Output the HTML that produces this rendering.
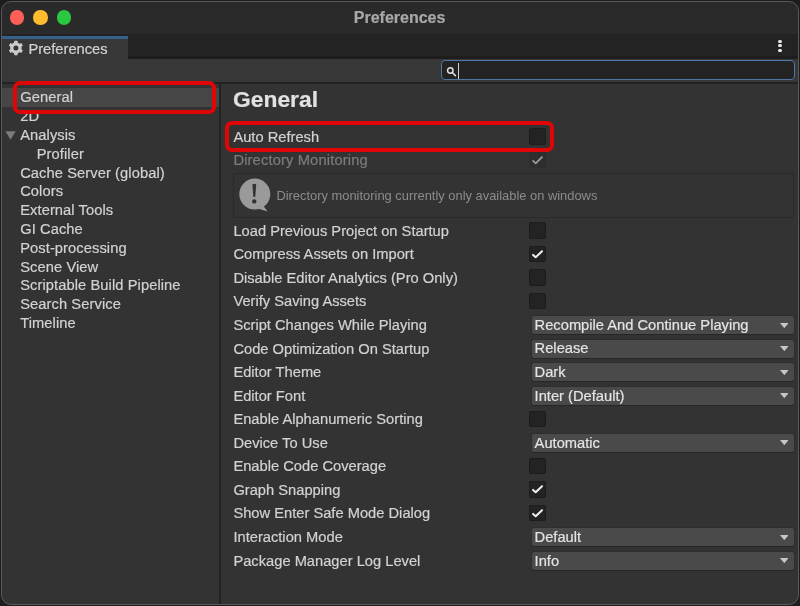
<!DOCTYPE html>
<html><head><meta charset="utf-8"><style>
html,body{margin:0;padding:0;}
body{width:800px;height:606px;position:relative;overflow:hidden;background:#1d1d1d;font-family:"Liberation Sans",sans-serif;}
.win{position:absolute;left:0.8px;top:0.8px;width:798px;height:604px;border-radius:10px;overflow:hidden;box-sizing:border-box;}
.frame{position:absolute;left:0.8px;top:0.8px;width:798px;height:604px;border-radius:10px;border:1.5px solid #585858;box-sizing:border-box;pointer-events:none;}
.b{position:absolute;}
.t{position:absolute;white-space:nowrap;-webkit-text-stroke:0.2px currentColor;}
</style></head><body>
<div class="win">
<div style="position:absolute;left:-0.8px;top:-0.8px;width:800px;height:606px;will-change:transform;">
<div class="b" style="left:2.00px;top:2.00px;width:796.00px;height:32.30px;background:#2a2a2a"></div>
<div class="b" style="left:2.00px;top:34.30px;width:796.00px;height:24.20px;background:#232323"></div>
<div class="b" style="left:2.00px;top:35.75px;width:126.00px;height:22.75px;background:#373737"></div>
<div class="b" style="left:2.00px;top:35.75px;width:126.00px;height:3.00px;background:#35608a"></div>
<div class="b" style="left:128.00px;top:56.20px;width:670.00px;height:2.30px;background:#1e1e1e"></div>
<div class="b" style="left:2.00px;top:58.50px;width:796.00px;height:23.50px;background:#373737"></div>
<div class="b" style="left:2.00px;top:82.00px;width:796.00px;height:2.40px;background:#222222"></div>
<div class="b" style="left:2.00px;top:84.40px;width:796.00px;height:519.60px;background:#333333"></div>
<div class="b" style="left:219.00px;top:83.80px;width:2.00px;height:520.20px;background:#222222"></div>
<div class="b" style="left:2.00px;top:87.60px;width:217.00px;height:19.40px;background:#464646"></div>
<div class="b" style="left:9.80px;top:10.30px;width:14.4px;height:14.4px;border-radius:50%;background:#fe5f57"></div>
<div class="b" style="left:33.30px;top:10.30px;width:14.4px;height:14.4px;border-radius:50%;background:#febc2e"></div>
<div class="b" style="left:56.80px;top:10.30px;width:14.4px;height:14.4px;border-radius:50%;background:#28c840"></div>
<div class="t" style="left:353.75px;top:8.26px;font-size:16px;line-height:20.0px;color:#a8a8a8;font-weight:bold;">Preferences</div>
<div class="t" style="left:28.40px;top:39.92px;font-size:14.7px;line-height:18.38px;color:#d2d2d2;font-weight:normal;">Preferences</div>
<svg class="b" style="left:0;top:0" width="40" height="70" viewBox="0 0 40 70"><g fill="#cbcbcb"><rect x="14.200000000000001" y="40.8" width="3.4" height="14.4" rx="0.5" transform="rotate(0 15.9 48.0)"/><rect x="14.200000000000001" y="40.8" width="3.4" height="14.4" rx="0.5" transform="rotate(60 15.9 48.0)"/><rect x="14.200000000000001" y="40.8" width="3.4" height="14.4" rx="0.5" transform="rotate(120 15.9 48.0)"/><circle cx="15.9" cy="48.0" r="5.7"/></g><circle cx="15.9" cy="48.0" r="2.5" fill="#373737"/></svg>
<div class="b" style="left:778.2px;top:39.70px;width:3.4px;height:3.4px;border-radius:50%;background:#e8e8e8"></div>
<div class="b" style="left:778.2px;top:44.10px;width:3.4px;height:3.4px;border-radius:50%;background:#e8e8e8"></div>
<div class="b" style="left:778.2px;top:48.50px;width:3.4px;height:3.4px;border-radius:50%;background:#e8e8e8"></div>
<div class="b" style="left:441.30px;top:60.30px;width:353.70px;height:19.70px;background:#232323;border:1.4px solid #4d78a6;border-radius:4px;box-sizing:border-box"></div>
<svg class="b" style="left:446px;top:65.5px" width="11" height="11" viewBox="0 0 11 11"><circle cx="4.3" cy="4.5" r="2.7" fill="none" stroke="#e0e0e0" stroke-width="1.5"/><path d="M6.2 6.5L9.4 9.6" stroke="#e0e0e0" stroke-width="1.6" stroke-linecap="round"/></svg>
<div class="b" style="left:457.80px;top:62.80px;width:1.30px;height:16.20px;background:#cfcfcf"></div>
<div class="t" style="left:20.20px;top:88.27px;font-size:14.7px;line-height:18.38px;color:#d2d2d2;font-weight:normal;letter-spacing:0.08px;">General</div>
<div class="t" style="left:20.20px;top:107.09px;font-size:14.7px;line-height:18.38px;color:#d2d2d2;font-weight:normal;letter-spacing:0.08px;">2D</div>
<div class="t" style="left:20.20px;top:125.91px;font-size:14.7px;line-height:18.38px;color:#d2d2d2;font-weight:normal;letter-spacing:0.08px;">Analysis</div>
<div class="t" style="left:36.70px;top:144.73px;font-size:14.7px;line-height:18.38px;color:#d2d2d2;font-weight:normal;letter-spacing:0.08px;">Profiler</div>
<div class="t" style="left:20.20px;top:163.55px;font-size:14.7px;line-height:18.38px;color:#d2d2d2;font-weight:normal;letter-spacing:0.08px;">Cache Server (global)</div>
<div class="t" style="left:20.20px;top:182.37px;font-size:14.7px;line-height:18.38px;color:#d2d2d2;font-weight:normal;letter-spacing:0.08px;">Colors</div>
<div class="t" style="left:20.20px;top:201.19px;font-size:14.7px;line-height:18.38px;color:#d2d2d2;font-weight:normal;letter-spacing:0.08px;">External Tools</div>
<div class="t" style="left:20.20px;top:220.01px;font-size:14.7px;line-height:18.38px;color:#d2d2d2;font-weight:normal;letter-spacing:0.08px;">GI Cache</div>
<div class="t" style="left:20.20px;top:238.83px;font-size:14.7px;line-height:18.38px;color:#d2d2d2;font-weight:normal;letter-spacing:0.08px;">Post-processing</div>
<div class="t" style="left:20.20px;top:257.65px;font-size:14.7px;line-height:18.38px;color:#d2d2d2;font-weight:normal;letter-spacing:0.08px;">Scene View</div>
<div class="t" style="left:20.20px;top:276.47px;font-size:14.7px;line-height:18.38px;color:#d2d2d2;font-weight:normal;letter-spacing:0.08px;">Scriptable Build Pipeline</div>
<div class="t" style="left:20.20px;top:295.29px;font-size:14.7px;line-height:18.38px;color:#d2d2d2;font-weight:normal;letter-spacing:0.08px;">Search Service</div>
<div class="t" style="left:20.20px;top:314.11px;font-size:14.7px;line-height:18.38px;color:#d2d2d2;font-weight:normal;letter-spacing:0.08px;">Timeline</div>
<svg class="b" style="left:5px;top:131px" width="11" height="9" viewBox="0 0 11 9"><path d="M0.5 0.25H10.75L5.5 8.75z" fill="#7a7a7a"/></svg>
<div class="t" style="left:233.10px;top:85.40px;font-size:22.8px;line-height:28.5px;color:#e2e2e2;font-weight:bold;">General</div>
<div class="t" style="left:233.40px;top:127.62px;font-size:14.7px;line-height:18.38px;color:#d2d2d2;font-weight:normal;">Auto Refresh</div>
<div class="b" style="left:529.25px;top:128.00px;width:16.50px;height:16.50px;background:#232323;border:1px solid #1c1c1c;border-radius:2px;box-sizing:border-box"></div>
<div class="t" style="left:233.40px;top:151.22px;font-size:14.7px;line-height:18.38px;color:#7c7c7c;font-weight:normal;letter-spacing:0.15px;">Directory Monitoring</div>
<div class="b" style="left:529.40px;top:151.60px;width:16.20px;height:16.20px;background:#2e2e2e;border-radius:2px"></div>
<svg class="b" style="left:529.25px;top:151.60px" width="16.5" height="16.5" viewBox="0 0 16.5 16.5"><path d="M4.1 8.9L6.7 11.3 13 5.2" fill="none" stroke="#9c9c9c" stroke-width="1.8" stroke-linecap="round" stroke-linejoin="round"/></svg>
<div class="b" style="left:232.50px;top:173.10px;width:561.30px;height:44.60px;background:#333333;border:1px solid #2a2a2a;border-radius:2px;box-sizing:border-box"></div>
<svg class="b" style="left:236px;top:175px" width="38" height="40" viewBox="236 175 38 40"><circle cx="254.8" cy="194.1" r="15.5" fill="#9a9a9a"/><path d="M262 204 L267.6 211.4 L256 208z" fill="#9a9a9a"/><path d="M252.4 184.6 Q254.3 182.8 256.2 184.6 L255.3 196.6 Q254.3 197.6 253.3 196.6z" fill="#333"/><circle cx="254.3" cy="201.4" r="2.2" fill="#333"/></svg>
<div class="t" style="left:276.40px;top:187.97px;font-size:12.9px;line-height:16.12px;color:#8c8c8c;font-weight:normal;-webkit-text-stroke:0;">Directory monitoring currently only available on windows</div>
<div class="t" style="left:233.40px;top:221.77px;font-size:14.7px;line-height:18.38px;color:#d2d2d2;font-weight:normal;">Load Previous Project on Startup</div>
<div class="b" style="left:529.25px;top:222.15px;width:16.50px;height:16.50px;background:#232323;border:1px solid #1c1c1c;border-radius:2px;box-sizing:border-box"></div>
<div class="t" style="left:233.40px;top:245.33px;font-size:14.7px;line-height:18.38px;color:#d2d2d2;font-weight:normal;">Compress Assets on Import</div>
<div class="b" style="left:529.25px;top:245.71px;width:16.50px;height:16.50px;background:#232323;border:1px solid #1c1c1c;border-radius:2px;box-sizing:border-box"></div>
<svg class="b" style="left:529.25px;top:245.71px" width="16.5" height="16.5" viewBox="0 0 16.5 16.5"><path d="M4.1 8.9L6.7 11.3 13 5.2" fill="none" stroke="#f2f2f2" stroke-width="2" stroke-linecap="round" stroke-linejoin="round"/></svg>
<div class="t" style="left:233.40px;top:268.89px;font-size:14.7px;line-height:18.38px;color:#d2d2d2;font-weight:normal;">Disable Editor Analytics (Pro Only)</div>
<div class="b" style="left:529.25px;top:269.27px;width:16.50px;height:16.50px;background:#232323;border:1px solid #1c1c1c;border-radius:2px;box-sizing:border-box"></div>
<div class="t" style="left:233.40px;top:292.45px;font-size:14.7px;line-height:18.38px;color:#d2d2d2;font-weight:normal;">Verify Saving Assets</div>
<div class="b" style="left:529.25px;top:292.83px;width:16.50px;height:16.50px;background:#232323;border:1px solid #1c1c1c;border-radius:2px;box-sizing:border-box"></div>
<div class="t" style="left:233.40px;top:316.01px;font-size:14.7px;line-height:18.38px;color:#d2d2d2;font-weight:normal;">Script Changes While Playing</div>
<div class="b" style="left:531.20px;top:315.29px;width:263.60px;height:19.70px;background:#4a4a4a;border:1px solid #2e2e2e;border-bottom-color:#262626;border-radius:3px;box-sizing:border-box"></div>
<div class="t" style="left:534.60px;top:315.91px;font-size:14.7px;line-height:18.38px;color:#e4e4e4;font-weight:normal;">Recompile And Continue Playing</div>
<svg class="b" style="left:779.8px;top:322.69px" width="8.6" height="5.2" viewBox="0 0 8.6 5.2"><path d="M0 0H8.6L4.3 5.2z" fill="#c6c6c6"/></svg>
<div class="t" style="left:233.40px;top:339.57px;font-size:14.7px;line-height:18.38px;color:#d2d2d2;font-weight:normal;">Code Optimization On Startup</div>
<div class="b" style="left:531.20px;top:338.85px;width:263.60px;height:19.70px;background:#4a4a4a;border:1px solid #2e2e2e;border-bottom-color:#262626;border-radius:3px;box-sizing:border-box"></div>
<div class="t" style="left:534.60px;top:339.47px;font-size:14.7px;line-height:18.38px;color:#e4e4e4;font-weight:normal;">Release</div>
<svg class="b" style="left:779.8px;top:346.25px" width="8.6" height="5.2" viewBox="0 0 8.6 5.2"><path d="M0 0H8.6L4.3 5.2z" fill="#c6c6c6"/></svg>
<div class="t" style="left:233.40px;top:363.13px;font-size:14.7px;line-height:18.38px;color:#d2d2d2;font-weight:normal;">Editor Theme</div>
<div class="b" style="left:531.20px;top:362.41px;width:263.60px;height:19.70px;background:#4a4a4a;border:1px solid #2e2e2e;border-bottom-color:#262626;border-radius:3px;box-sizing:border-box"></div>
<div class="t" style="left:534.60px;top:363.03px;font-size:14.7px;line-height:18.38px;color:#e4e4e4;font-weight:normal;">Dark</div>
<svg class="b" style="left:779.8px;top:369.81px" width="8.6" height="5.2" viewBox="0 0 8.6 5.2"><path d="M0 0H8.6L4.3 5.2z" fill="#c6c6c6"/></svg>
<div class="t" style="left:233.40px;top:386.69px;font-size:14.7px;line-height:18.38px;color:#d2d2d2;font-weight:normal;">Editor Font</div>
<div class="b" style="left:531.20px;top:385.97px;width:263.60px;height:19.70px;background:#4a4a4a;border:1px solid #2e2e2e;border-bottom-color:#262626;border-radius:3px;box-sizing:border-box"></div>
<div class="t" style="left:534.60px;top:386.59px;font-size:14.7px;line-height:18.38px;color:#e4e4e4;font-weight:normal;">Inter (Default)</div>
<svg class="b" style="left:779.8px;top:393.37px" width="8.6" height="5.2" viewBox="0 0 8.6 5.2"><path d="M0 0H8.6L4.3 5.2z" fill="#c6c6c6"/></svg>
<div class="t" style="left:233.40px;top:410.25px;font-size:14.7px;line-height:18.38px;color:#d2d2d2;font-weight:normal;">Enable Alphanumeric Sorting</div>
<div class="b" style="left:529.25px;top:410.63px;width:16.50px;height:16.50px;background:#232323;border:1px solid #1c1c1c;border-radius:2px;box-sizing:border-box"></div>
<div class="t" style="left:233.40px;top:433.81px;font-size:14.7px;line-height:18.38px;color:#d2d2d2;font-weight:normal;">Device To Use</div>
<div class="b" style="left:531.20px;top:433.09px;width:263.60px;height:19.70px;background:#4a4a4a;border:1px solid #2e2e2e;border-bottom-color:#262626;border-radius:3px;box-sizing:border-box"></div>
<div class="t" style="left:534.60px;top:433.71px;font-size:14.7px;line-height:18.38px;color:#e4e4e4;font-weight:normal;">Automatic</div>
<svg class="b" style="left:779.8px;top:440.49px" width="8.6" height="5.2" viewBox="0 0 8.6 5.2"><path d="M0 0H8.6L4.3 5.2z" fill="#c6c6c6"/></svg>
<div class="t" style="left:233.40px;top:457.37px;font-size:14.7px;line-height:18.38px;color:#d2d2d2;font-weight:normal;">Enable Code Coverage</div>
<div class="b" style="left:529.25px;top:457.75px;width:16.50px;height:16.50px;background:#232323;border:1px solid #1c1c1c;border-radius:2px;box-sizing:border-box"></div>
<div class="t" style="left:233.40px;top:480.93px;font-size:14.7px;line-height:18.38px;color:#d2d2d2;font-weight:normal;">Graph Snapping</div>
<div class="b" style="left:529.25px;top:481.31px;width:16.50px;height:16.50px;background:#232323;border:1px solid #1c1c1c;border-radius:2px;box-sizing:border-box"></div>
<svg class="b" style="left:529.25px;top:481.31px" width="16.5" height="16.5" viewBox="0 0 16.5 16.5"><path d="M4.1 8.9L6.7 11.3 13 5.2" fill="none" stroke="#f2f2f2" stroke-width="2" stroke-linecap="round" stroke-linejoin="round"/></svg>
<div class="t" style="left:233.40px;top:504.49px;font-size:14.7px;line-height:18.38px;color:#d2d2d2;font-weight:normal;">Show Enter Safe Mode Dialog</div>
<div class="b" style="left:529.25px;top:504.87px;width:16.50px;height:16.50px;background:#232323;border:1px solid #1c1c1c;border-radius:2px;box-sizing:border-box"></div>
<svg class="b" style="left:529.25px;top:504.87px" width="16.5" height="16.5" viewBox="0 0 16.5 16.5"><path d="M4.1 8.9L6.7 11.3 13 5.2" fill="none" stroke="#f2f2f2" stroke-width="2" stroke-linecap="round" stroke-linejoin="round"/></svg>
<div class="t" style="left:233.40px;top:528.05px;font-size:14.7px;line-height:18.38px;color:#d2d2d2;font-weight:normal;">Interaction Mode</div>
<div class="b" style="left:531.20px;top:527.33px;width:263.60px;height:19.70px;background:#4a4a4a;border:1px solid #2e2e2e;border-bottom-color:#262626;border-radius:3px;box-sizing:border-box"></div>
<div class="t" style="left:534.60px;top:527.95px;font-size:14.7px;line-height:18.38px;color:#e4e4e4;font-weight:normal;">Default</div>
<svg class="b" style="left:779.8px;top:534.73px" width="8.6" height="5.2" viewBox="0 0 8.6 5.2"><path d="M0 0H8.6L4.3 5.2z" fill="#c6c6c6"/></svg>
<div class="t" style="left:233.40px;top:551.61px;font-size:14.7px;line-height:18.38px;color:#d2d2d2;font-weight:normal;">Package Manager Log Level</div>
<div class="b" style="left:531.20px;top:550.89px;width:263.60px;height:19.70px;background:#4a4a4a;border:1px solid #2e2e2e;border-bottom-color:#262626;border-radius:3px;box-sizing:border-box"></div>
<div class="t" style="left:534.60px;top:551.51px;font-size:14.7px;line-height:18.38px;color:#e4e4e4;font-weight:normal;">Info</div>
<svg class="b" style="left:779.8px;top:558.29px" width="8.6" height="5.2" viewBox="0 0 8.6 5.2"><path d="M0 0H8.6L4.3 5.2z" fill="#c6c6c6"/></svg>
<div class="b" style="left:13.20px;top:80.90px;width:202.80px;height:33.10px;border:4.5px solid #e00606;border-radius:7px;box-sizing:border-box"></div>
<div class="b" style="left:224.70px;top:120.60px;width:329.30px;height:31.50px;border:4.5px solid #e00606;border-radius:7px;box-sizing:border-box"></div>
</div>
</div>
<div class="frame"></div>
</body></html>
